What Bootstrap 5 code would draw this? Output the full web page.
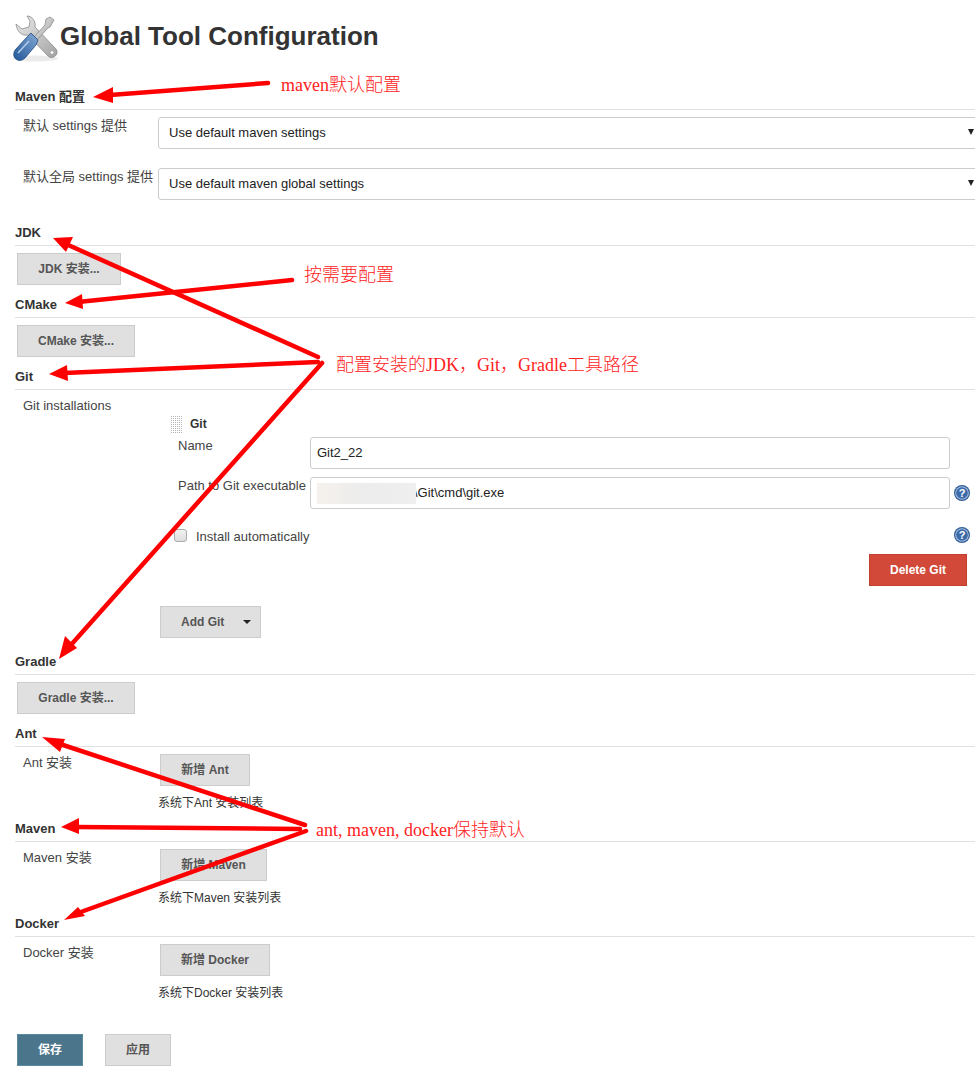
<!DOCTYPE html>
<html lang="zh">
<head>
<meta charset="utf-8">
<link rel="stylesheet" href="https://cdn.jsdelivr.net/npm/bootstrap@5.3.0/dist/css/bootstrap.min.css">
<style>
html,body{margin:0;background:#fff;overflow-x:hidden}
body{font-family:"Liberation Sans","Noto Sans CJK SC",sans-serif;font-size:13px;line-height:18px;color:#333;width:975px;height:1079px;overflow:hidden}
.page-wrap{position:relative;width:975px;height:1079px;overflow:hidden;padding:15px 0 0 15px}
.title-row{height:47px;margin-left:-3px}
.title-row svg{flex:none}
.title-text{font-size:26px;font-weight:700;line-height:42px;color:#333;margin:0 0 6px}
.sect-head{font-size:13px;font-weight:700;line-height:18px;border-bottom:1px solid #e0e0e0;padding-bottom:3px;color:#333;margin:0}
.sect-maven{margin-top:26px}
.row-lbl{padding-left:8px;color:#444;flex:0 0 143px;white-space:nowrap}
.sel-box{flex:none;width:900px;height:32px;border:1px solid #ccc;border-radius:3px;padding:0 10px;display:flex;align-items:center;font-size:13px;color:#222;background:#fff;position:relative}
.sel-arrow{position:absolute;left:809px;top:11px;width:0;height:0;border-left:3px solid transparent;border-right:3px solid transparent;border-top:6px solid #222}
.jbtn{display:block;height:32px;background:#e0e0e0;border:1px solid #ccc;border-radius:0;font-size:12px;font-weight:700;color:#555;line-height:30px;padding:0;text-align:center}
.jbtn:hover{background:#e0e0e0;color:#555}
.in-box{flex:none;width:640px;height:32px;border:1px solid #ccc;border-radius:3px;font-size:13px;color:#222;padding:0 6px;display:flex;align-items:center;background:#fff}
.blur-bit{width:99px;height:21px;background:linear-gradient(90deg,#f6f1ec,#ececec 45%,#efefef);flex:none;margin-right:-2px;position:relative;z-index:1}
.help-ic{width:16px;height:16px;flex:none}
.grip-ic{width:12px;height:17px;flex:none}
.cb-box{width:13px;height:13px;border:1px solid #aaa;border-radius:3px;background:linear-gradient(#f2f2f2,#dedede);flex:none;align-self:flex-start;margin-top:1px}
.hint-line{font-size:12px;line-height:16px;color:#333;margin-left:0}
.notes-layer{position:absolute;left:0;top:0;width:975px;height:1079px;pointer-events:none}
.note-text{position:absolute;color:#f22;font-family:"Liberation Serif","Noto Sans CJK SC",serif;font-size:18px;font-weight:300;line-height:20px;white-space:nowrap}
.btn-save{background:#4b758b;border-color:#5a8ba3;color:#fff}
.btn-save:hover{background:#4b758b;color:#fff}
.btn-del{background:#d24939;border-color:#c43f30;color:#fff}
.btn-del:hover{background:#d24939;color:#fff}
.caret-tri{display:inline-block;width:0;height:0;border-left:4px solid transparent;border-right:4px solid transparent;border-top:4px solid #222;margin-left:19px}
.first-row{margin-top:7px}
.selgap{margin-top:19px}
.h-jdk{margin-top:24px}
.btn-row{margin:7px 0 0 2px}
.h-next{margin-top:11px}
.w104{width:104px}.w118{width:118px}.w98{width:98px}.w101{width:101px}.w90{width:90px}.w107{width:107px}.w110{width:110px}.w66{width:66px}
.git-area{margin-top:7px}
.git-col{padding-top:18px;position:relative}
.git-hd{height:18px;margin-left:13px}
.git-name{margin-left:7px;font-size:12px;color:#333}
.git-row1{margin-top:4px;margin-left:20px}
.git-row2{margin-top:8px;margin-left:20px;align-items:flex-start}
.git-lbl{flex:0 0 132px;color:#444;white-space:nowrap}
.help-a{margin:8px 0 0 4px}
.inst-row{margin:19px 0 0 16px;width:796px;height:18px}
.inst-lbl{margin-left:9px;color:#444}
.help-b{margin-bottom:4px}
.del-row{width:809px;margin-top:8px}
.add-git{margin:20px 0 0 2px;display:flex;align-items:center;justify-content:flex-start;padding-left:20px}
.h-gradle{margin-top:15px}
.ms-2px{margin-left:2px}
.mt-9px{margin-top:9px}
.h-tool{margin-top:9px}
.save-row{margin:33px 0 0 2px;gap:22px}
.n1{left:281px;top:75px}.n2{left:304px;top:265px}.n3{left:336px;top:355px}.n4{left:316px;top:820px}
</style>
</head>
<body>
<div class="page-wrap">
  <div class="d-flex align-items-center title-row">
    <svg width="48" height="47" viewBox="12 15 48 47">
      <defs>
        <linearGradient id="mt" x1="0" y1="0" x2="1" y2="1"><stop offset="0" stop-color="#ececec"/><stop offset="1" stop-color="#a2a2a2"/></linearGradient>
        <linearGradient id="bl" x1="1" y1="0" x2="0" y2="1"><stop offset="0" stop-color="#86abd6"/><stop offset="1" stop-color="#1f5596"/></linearGradient>
      </defs>
      <ellipse cx="35" cy="58.5" rx="23" ry="3" fill="#ddd" opacity=".6"/>
      <path d="M27 16C32 16 36 21 35 27L56 49C58 52 57 55 55 56C53 58 50 58 48 56L28 35C22 36 17 32 16 24L22 29L29 27L30 21z" fill="url(#mt)" stroke="#8a8a8a" stroke-width=".8"/>
      <circle cx="52" cy="52.5" r="1.8" fill="#fff" stroke="#888" stroke-width=".5"/>
      <path d="M46 19L50 17L54 20L50 27L48 28L36 41L33 38L45 25z" fill="url(#mt)" stroke="#808080" stroke-width=".7"/>
      <path d="M31 33L38 40L36 45L25 58C22 61 18 61 16 59C13 57 13 52 16 49L27 37z" fill="url(#bl)" stroke="#1e4a82" stroke-width=".8"/>
      <path d="M18 53L29 41" stroke="#b2cbe8" stroke-width="1.6" fill="none"/>
    </svg>
    <h1 class="title-text">Global Tool Configuration</h1>
  </div>

  <h2 class="sect-head sect-maven">Maven 配置</h2>
  <div class="d-flex first-row"><div class="row-lbl">默认 settings 提供</div><div class="sel-box">Use default maven settings<span class="sel-arrow"></span></div></div>
  <div class="d-flex selgap"><div class="row-lbl">默认全局 settings 提供</div><div class="sel-box">Use default maven global settings<span class="sel-arrow"></span></div></div>

  <h2 class="sect-head h-jdk">JDK</h2>
  <div class="btn-row"><button class="btn jbtn w104">JDK 安装...</button></div>
  <h2 class="sect-head h-next">CMake</h2>
  <div class="btn-row"><button class="btn jbtn w118">CMake 安装...</button></div>
  <h2 class="sect-head h-next">Git</h2>

  <div class="d-flex git-area">
    <div class="row-lbl">Git installations</div>
    <div class="flex-grow-1 git-col">
      <div class="d-flex align-items-center git-hd">
        <svg class="grip-ic" viewBox="0 0 12 17"><defs><pattern id="gp" width="2" height="2" patternUnits="userSpaceOnUse"><rect width="1" height="1" fill="#b4b4b4"/></pattern></defs><rect width="12" height="17" fill="url(#gp)"/></svg>
        <strong class="git-name">Git</strong>
      </div>
      <div class="d-flex git-row1"><div class="git-lbl">Name</div><div class="in-box">Git2_22</div></div>
      <div class="d-flex git-row2"><div class="git-lbl">Path to Git executable</div><div class="in-box"><span class="blur-bit"></span>\Git\cmd\git.exe</div>
        <svg class="help-ic help-a" viewBox="0 0 16 16"><circle cx="8" cy="8" r="8" fill="#2f5c9a"/><circle cx="8" cy="8" r="6.8" fill="#a9c1dc"/><circle cx="8" cy="8" r="5.8" fill="#3c6aa8"/><text x="8" y="12" text-anchor="middle" font-family="Liberation Sans" font-weight="700" font-size="11" fill="#fff">?</text></svg>
      </div>
      <div class="d-flex align-items-center inst-row"><span class="cb-box"></span><span class="inst-lbl">Install automatically</span>
        <svg class="help-ic ms-auto help-b" viewBox="0 0 16 16"><circle cx="8" cy="8" r="8" fill="#2f5c9a"/><circle cx="8" cy="8" r="6.8" fill="#a9c1dc"/><circle cx="8" cy="8" r="5.8" fill="#3c6aa8"/><text x="8" y="12" text-anchor="middle" font-family="Liberation Sans" font-weight="700" font-size="11" fill="#fff">?</text></svg>
      </div>
      <div class="d-flex justify-content-end del-row"><button class="btn jbtn btn-del w98">Delete Git</button></div>
      <button class="btn jbtn add-git w101"><span>Add Git</span><span class="caret-tri"></span></button>
    </div>
  </div>

  <h2 class="sect-head h-gradle">Gradle</h2>
  <div class="btn-row"><button class="btn jbtn w118">Gradle 安装...</button></div>
  <h2 class="sect-head h-next">Ant</h2>
  <div class="d-flex first-row"><div class="row-lbl">Ant 安装</div><div><button class="btn jbtn w90 ms-2px">新增 Ant</button><div class="hint-line mt-9px">系统下Ant 安装列表</div></div></div>
  <h2 class="sect-head h-tool">Maven</h2>
  <div class="d-flex first-row"><div class="row-lbl">Maven 安装</div><div><button class="btn jbtn w107 ms-2px">新增 Maven</button><div class="hint-line mt-9px">系统下Maven 安装列表</div></div></div>
  <h2 class="sect-head h-tool">Docker</h2>
  <div class="d-flex first-row"><div class="row-lbl">Docker 安装</div><div><button class="btn jbtn w110 ms-2px">新增 Docker</button><div class="hint-line mt-9px">系统下Docker 安装列表</div></div></div>

  <div class="d-flex save-row"><button class="btn jbtn btn-save w66">保存</button><button class="btn jbtn w66">应用</button></div>

  <svg class="notes-layer" viewBox="0 0 975 1079">
    <g stroke="#f00" stroke-width="4.5" stroke-linecap="round" fill="none">
      <line x1="268" y1="83" x2="110" y2="95"/>
      <line x1="292" y1="280" x2="78" y2="302"/>
      <line x1="318" y1="357" x2="66" y2="244"/>
      <line x1="318" y1="362" x2="64" y2="373"/>
      <line x1="322" y1="363" x2="70" y2="646"/>
      <line x1="305" y1="825" x2="57" y2="743"/>
      <line x1="300" y1="829" x2="76" y2="827"/>
      <line x1="306" y1="831" x2="78" y2="913"/>
    </g>
    <g fill="#f00">
      <polygon points="93,97 113,87 113,103"/>
      <polygon points="65,303 82,294 83,309"/>
      <polygon points="53,238 73,237 66,252"/>
      <polygon points="49,374 67,365 68,381"/>
      <polygon points="59,659 65,636 77,648"/>
      <polygon points="42,737 65,739 60,752"/>
      <polygon points="61,827 79,818 79,834"/>
      <polygon points="64,920 78,907 85,916"/>
    </g>
  </svg>
  <div class="note-text n1">maven默认配置</div>
  <div class="note-text n2">按需要配置</div>
  <div class="note-text n3">配置安装的JDK，Git，Gradle工具路径</div>
  <div class="note-text n4">ant, maven, docker保持默认</div>
</div>
<script src="https://cdn.jsdelivr.net/npm/bootstrap@5.3.0/dist/js/bootstrap.bundle.min.js"></script>
</body>
</html>
